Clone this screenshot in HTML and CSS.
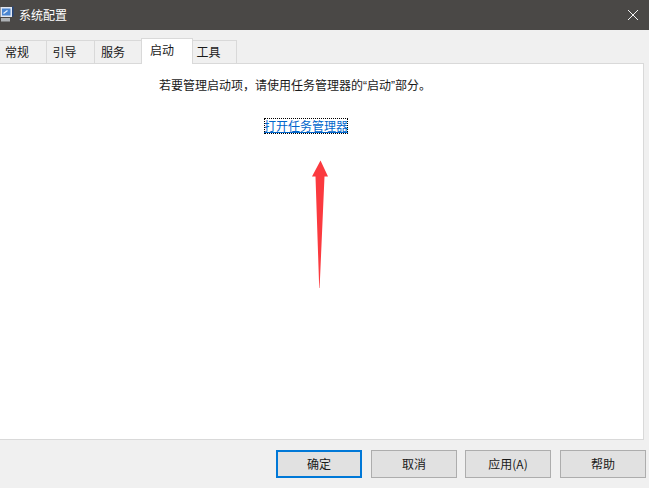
FILE: index.html
```html
<!DOCTYPE html>
<html lang="zh-CN">
<head>
<meta charset="utf-8">
<title>系统配置</title>
<link rel="stylesheet" href="styles.css">
</head>
<body>
<div class="window">
  <header class="titlebar">
    <svg class="app-icon" width="14" height="22" viewBox="0 0 14 22">
      <rect x="0.500" y="3" width="11.500" height="10" fill="#e3e8f2"/>
      <rect x="2" y="4.500" width="8.500" height="7" fill="#4a86d2"/>
      <path d="M3.500 9.500l4-3" stroke="#eef4fb" stroke-width="1.200"/>
      <path d="M12 3l1.500-1v10l-1.500 1z" fill="#23457c"/>
      <rect x="1" y="14" width="9" height="3.500" fill="#aeb2b6"/>
    </svg>
    <span class="title">系统配置</span>
    <svg class="close" width="12" height="12" viewBox="0 0 12 12">
      <path d="M1 1l10 10M11 1L1 11" stroke="#f4f4f4" stroke-width="1" fill="none"/>
    </svg>
  </header>
  <nav class="tabs">
    <span class="tab tab-first">常规</span>
    <span class="tab tab-second">引导</span>
    <span class="tab tab-third">服务</span>
    <span class="tab tab-active">启动</span>
    <span class="tab tab-last">工具</span>
  </nav>
  <main class="panel">
    <p class="message">若要管理启动项，请使用任务管理器的<span class="latin">“</span>启动<span class="latin">”</span>部分。</p>
    <a class="link" href="#">打开任务管理器</a>
  </main>
  <footer class="actions">
    <button class="btn btn-default">确定</button>
    <button class="btn">取消</button>
    <button class="btn btn-tight">应用(A)</button>
    <button class="btn">帮助</button>
  </footer>
  <svg class="arrow" width="18" height="130" viewBox="0 0 18 130">
    <path d="M9.500 0.500L17 16.500H13.500L8.600 128H8.200L4.500 16.500H1Z" fill="#fb3a3f"/>
  </svg>
</div>
</body>
</html>
```
FILE: styles.css
```css
* { box-sizing: border-box; }
html, body { margin: 0; padding: 0; }
body {
  width: 649px;
  height: 488px;
  overflow: hidden;
  font-family: "Noto Sans CJK SC", "Liberation Sans", sans-serif;
  font-size: 12px;
  color: #1a1a1a;
  background: #f0f0f0;
}
.window {
  position: relative;
  width: 649px;
  height: 488px;
  display: flex;
  flex-direction: column;
}
.titlebar {
  height: 30px;
  flex: none;
  display: flex;
  align-items: center;
  background: #4a4846;
  color: #fff;
  padding-right: 5px;
}
.app-icon { margin-right: 5px; flex: none; }
.title { font-size: 12px; line-height: 30px; }
.close { margin-left: auto; margin-right: 5px; }
.tabs {
  height: 34px;
  flex: none;
  display: flex;
  align-items: flex-end;
  padding-top: 9px;
  position: relative;
  z-index: 1;
}
.tab {
  height: 24px;
  display: flex;
  align-items: center;
  justify-content: center;
  background: #f0f0f0;
  border: 1px solid #d9d9d9;
  border-left: 0;
  padding: 0 10px 2px 0;
}
.tab-first { width: 47px; padding-right: 12px; }
.tab-second { width: 48px; padding-right: 12px; }
.tab-third { width: 47px; }
.tab-active {
  width: 52px;
  height: 26px;
  margin-left: -1px;
  border-left: 1px solid #d9d9d9;
  border-bottom: 0;
  background: #fff;
  padding-bottom: 4px;
}
.tab-last { width: 44px; padding-right: 12px; }
.panel {
  flex: none;
  height: 377px;
  width: 644px;
  margin-top: -1px;
  background: #fff;
  border: 1px solid #d9d9d9;
  border-left: 0;
  display: flex;
  flex-direction: column;
  align-items: flex-start;
}
.message {
  margin: 12px 0 0 159px;
  line-height: 18px;
}
.latin { font-family: "Liberation Sans", sans-serif; }
.link {
  margin: 23px 0 0 264px;
  width: 84px;
  height: 16px;
  line-height: 15px;
  color: #0066cc;
  outline: 1px dotted #000;
  outline-offset: -1px;
  text-decoration: underline;
  text-decoration-skip-ink: none;
  text-underline-offset: 1px;
}
.actions {
  flex: none;
  display: flex;
  padding: 10px 0 0 276px;
  gap: 9px;
}
.btn {
  width: 86px;
  height: 28px;
  padding: 0 0 2px;
  background: #e1e1e1;
  border: 1px solid #adadad;
  font: inherit;
  color: #1a1a1a;
}
.btn-tight { margin-left: -1px; }
.btn-default { border: 2px solid #0078d7; }
.arrow {
  position: absolute;
  left: 311px;
  top: 160px;
}
```
